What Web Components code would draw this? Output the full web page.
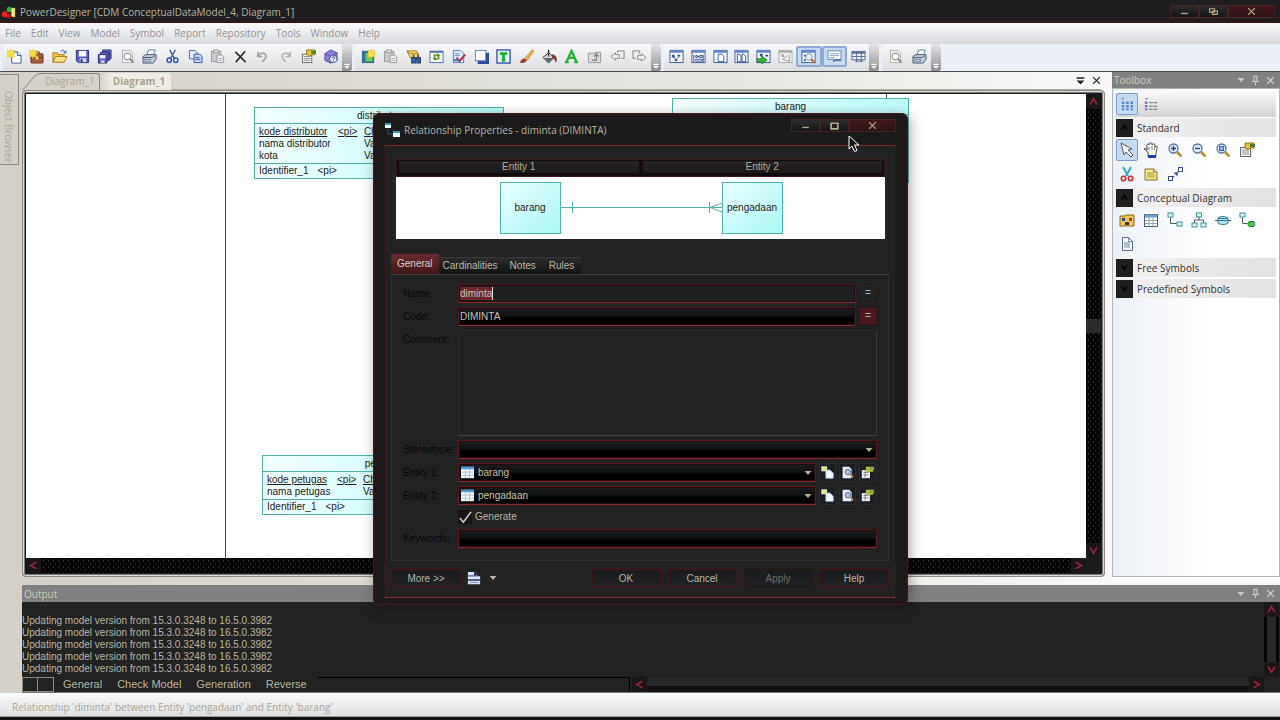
<!DOCTYPE html>
<html lang="en">
<head>
<meta charset="utf-8">
<title>PowerDesigner</title>
<style>
    html, body {
        height: 100%;
        margin: 0;
    }

    body {
        overflow: hidden;
        background: #111;
        font-family: "Open Sans", "Noto Sans", sans-serif;
        font-size: 10px;
        --arial: "Liberation Sans", Arial, sans-serif;
        --dark: #222;
    }
</style>
</head>
<body>
<pd-app></pd-app>

<script>
// Shared pieces for the small icons
const WIN = '<rect x="1" y="1.500" width="14" height="13" fill="#fff" stroke="#3a5a98"/><rect x="1" y="1" width="14" height="3" fill="#5f86c8"/>';
const LENS = '<circle cx="6.500" cy="6.500" r="4.500" fill="#dcecfb" stroke="#56759f" stroke-width="1.300"/><path d="M10 10l4.500 4.500" stroke="#b89128" stroke-width="2.600"/>';
const STAR = '<path d="M0 1l3 1 1-2 1 2 3-1-1 3 2 1-2 1 1 3-3-1-1 2-1-2-3 1 1-3-2-1 2-1z" fill="#f7df3c" stroke="#d8b62a" stroke-width=".4"/>';
const BOX = (x, y) => `<rect x="${x}" y="${y}" width="5" height="4" fill="#d8ffff" stroke="#3b8f95"/>`;

const ICONS = {
    logo: '<path d="M0 9c2-3 4 0 5-4l1 7c-1 3-5 2-6 0z" fill="#e22"/><circle cx="8.500" cy="5" r="3" fill="#2fae3c"/><path d="M4 14l3-5 4 4-3 2z" fill="#c11"/><path d="M11 4l4-1v11l-4-1z" fill="#f1d34a"/><path d="M11 4h2v9h-2z" fill="#fff3a8"/>',
    newdoc: '<path d="M5 3h6l4 4v8H5z" fill="#fdfeff" stroke="#38588f"/><path d="M11 3v4h4" fill="#cfe0f4" stroke="#38588f"/>' + STAR,
    project: '<rect x="2" y="5" width="13" height="10" rx="1" fill="#a5613a" stroke="#6d3c20"/><path d="M6 5V3h5v2M2 9h13" stroke="#6d3c20" fill="none"/><rect x="7" y="8" width="3" height="3" fill="#f4d79a"/>' + STAR,
    open: '<path d="M1 14V4h5l1 2h6v8z" fill="#f0c24a" stroke="#a97b1c"/><path d="M1 14l3-6h12l-3 6z" fill="#ffe08a" stroke="#a97b1c"/><path d="M9 3c2-3 4-2 5 1M12 3.500l2.500 1 .5-3" fill="none" stroke="#2f68b4"/>',
    save: '<path d="M1.500 1.500h13v13h-11l-2-2z" fill="#5a5ac4" stroke="#29297c"/><rect x="4" y="2" width="8" height="6" fill="#f4f6fb"/><rect x="5" y="10" width="7" height="4" fill="#d8dce8"/><rect x="6" y="11" width="2" height="3" fill="#29297c"/>',
    saveall: '<path d="M6 1h9v9l-2 2V3H6z" fill="#7777d4" stroke="#29297c"/><path d="M3.500 3.500h9v9h-9z" fill="#6a6acb" stroke="#29297c"/><path d="M1.500 6h9v9h-9z" fill="#5a5ac4" stroke="#29297c"/><rect x="3" y="6.500" width="6" height="3.500" fill="#eef"/><rect x="4" y="12" width="4" height="3" fill="#ccd"/>',
    preview: '<path d="M2.500 1.500h8l3 3v10h-11z" fill="#f6f6f6" stroke="#a9a9a9"/><circle cx="8" cy="8" r="3.500" fill="#fff" stroke="#9b9b9b" stroke-width="1.300"/><path d="M10.500 10.500l4 4" stroke="#8c8c8c" stroke-width="2"/>',
    print: '<path d="M5 7l2-6h7l-2 6z" fill="#fff" stroke="#5a79a8"/><path d="M1 8l3-2h11v5l-3 4H1z" fill="#c4cddb" stroke="#49566d"/><path d="M1 9h10l3-2" stroke="#49566d" fill="none"/><path d="M3 11h6v2H3z" fill="#eef4fb" stroke="#6b7890"/>',
    cut: '<path d="M5 1l5 9M11 1L6 10" stroke="#4a6294" stroke-width="1.600"/><circle cx="4.500" cy="12" r="2.300" fill="none" stroke="#2b57b5" stroke-width="1.600"/><circle cx="11.500" cy="12" r="2.300" fill="none" stroke="#2b57b5" stroke-width="1.600"/>',
    copy: '<path d="M1.500 1.500h6l2 2v7h-8z" fill="#dfeafb" stroke="#4669aa"/><path d="M6.500 5.500h6l2.500 2.500v6.500H6.500z" fill="#bcd3f5" stroke="#3558a0"/><path d="M8 9h4M8 11h5" stroke="#3558a0"/>',
    paste: '<rect x="1.500" y="2.500" width="10" height="11" fill="#c9c9c9" stroke="#989898"/><rect x="4" y="1" width="5" height="3" fill="#e6e6e6" stroke="#989898"/><path d="M7.500 6.500h5l2 2v6h-7z" fill="#f2f2f2" stroke="#989898"/><path d="M9 10h4M9 12h4" stroke="#aaa"/>',
    del: '<path d="M2.500 3l11 11M13 2.500L3 14" stroke="#2b2b2b" stroke-width="1.700"/>',
    undo: '<path d="M3 3v5h5M3.500 7.500c3-5 9-3 8 1-.4 2-2 4-4 5" fill="none" stroke="#a4a4a4" stroke-width="1.800"/>',
    redo: '<path d="M13 3v5H8M12.500 7.500c-3-5-9-3-8 1 .4 2 2 4 4 5" fill="none" stroke="#b4b4b4" stroke-width="1.800"/>',
    props: '<rect x="1.500" y="5.500" width="10" height="9" fill="#f4f4ee" stroke="#6b6b68"/><path d="M3 8h7M3 10h7M3 12h7" stroke="#8c9099"/><path d="M6 1h9v5h-4l-2 2-2-2H6z" fill="#e2c534" stroke="#8a7415"/><path d="M11 2h5v3h-5z" fill="#4f7a2c"/>',
    help: '<path d="M2 5l6-4 7 3v8l-7 3-6-3z" fill="#8d80d0" stroke="#5a4ea8"/><path d="M2 5l6 3 7-4M8 8v7" stroke="#5a4ea8" fill="none"/><circle cx="11" cy="10.500" r="4" fill="#e6ecfb" stroke="#45569c"/><path d="M9.700 9.500c.2-2 3-1.600 2.600 0-.2.800-1.200.8-1.200 2M11 12.500v1" stroke="#2c3f90" fill="none"/>',
    newdiag: '<rect x="1.500" y="2.500" width="12" height="12" fill="#3f9a4d" stroke="#2a5f94"/><rect x="1" y="2" width="3" height="13" fill="#356fb0"/><rect x="5" y="5" width="7" height="8" fill="#6fc56b"/><g transform="translate(7 0)">' + STAR + '</g>',
    find: '<path d="M1 2h10l2 3v5H5z" fill="#f7d76c" stroke="#9a7720"/><path d="M1 2l4 3h8" fill="none" stroke="#9a7720"/><rect x="6" y="9" width="4" height="6" fill="#3f63a0" stroke="#22406f"/><rect x="11.500" y="9" width="4" height="6" fill="#3f63a0" stroke="#22406f"/><path d="M8 6v3M13 6v3M10 11h2" stroke="#22406f" stroke-width="1.500"/>',
    refresh: '<rect x="1" y="2.500" width="14" height="12" fill="#fffff4" stroke="#4b6ea8"/><path d="M1 3h14" stroke="#4b6ea8" stroke-width="2"/><path d="M5 8c0-2 3-2 5-1M9 5l2 2-2 2M11 9c0 2-3 2-5 1M7 8l-2 2 2 2" fill="none" stroke="#4b9a20" stroke-width="1.400"/>',
    check: '<path d="M2.500 1.500h8l3 3v10h-11z" fill="#d9eafc" stroke="#4a7ec0"/><path d="M4 5h5M4 7h5" stroke="#5d8cc6"/><path d="M6 9l3 4 6-7" fill="none" stroke="#b8283c" stroke-width="2"/><path d="M3 12h5" stroke="#2b70c8" stroke-width="2"/>',
    shadow: '<rect x="4" y="4" width="12" height="12" fill="#2a4a9c"/><rect x="1.500" y="1.500" width="11" height="11" fill="#fbfdff" stroke="#5f82c8"/>',
    texticon: '<rect x="1" y="1" width="14" height="14" fill="#e6f0fc" stroke="#2f4fb0" stroke-width="1.400"/><path d="M4 5h8M8 5v7M6 12h4" stroke="#1fb22e" stroke-width="3"/>',
    brush: '<path d="M6 10L14 1l2 1-7 10z" fill="#f0b03e" stroke="#b97d1b" stroke-width=".6"/><path d="M1 15c1-4 3-5 5-5l2 2c0 2-3 3-7 3z" fill="#a03a2a"/>',
    bucket: '<path d="M1 9l6-5 6 5-6 6z" fill="#d9d9d9" stroke="#333"/><path d="M7 1v7" stroke="#222" stroke-width="1.500"/><path d="M11 6c4 0 5 4 4 8-1-3-2-4-4-5z" fill="#b02828" stroke="#333" stroke-width=".5"/><path d="M2 9.500h10l-5 5z" fill="#666"/>',
    font: '<path d="M3 13L8 2l5 11M5 9.500h6M1 14h4M11 14h4" stroke="#23b32f" stroke-width="2.400" fill="none"/>',
    export: '<path d="M1.500 4.500h6l1-1h6v11h-13z" fill="#dedede" stroke="#989898"/><path d="M5 12h5V6M7.500 8L10 5l2.500 3" fill="none" stroke="#8c8c8c" stroke-width="1.500"/>',
    back: '<path d="M1 8l5-4v2h4v4H6v2z" fill="#ececec" stroke="#8d8d8d"/><path d="M8 4V2h7v8h-3" fill="none" stroke="#9a9a9a" stroke-width="1.300"/>',
    forward: '<path d="M15 9l-5-4v2H6v4h4v2z" fill="#ececec" stroke="#8d8d8d"/><path d="M8 5V2H1v8h3" fill="none" stroke="#9a9a9a" stroke-width="1.300"/>',
    w1: WIN + '<path d="M3 6h3v3H3zM9 6h3v2H9zM6 11h3v2H6z" fill="#2f4fa0"/><path d="M5 8l2 3M11 8l-3 3" stroke="#2f4fa0"/>',
    w2: WIN + '<path d="M3 6v8M13 6v8M5 7h2v2H5zM9 7h3v2H9zM5 11h7v2H5zM7 8h2" fill="none" stroke="#2f4fa0"/>',
    w3: WIN + '<path d="M5.500 5.500h4l2 2v6h-6z" fill="#fff" stroke="#2f4fa0"/>',
    w4: WIN + '<path d="M3.500 5.500h2l2 2v6h-4zM8.500 5.500h2l2 2v6h-4z" fill="#fff" stroke="#2f4fa0"/>',
    w5: WIN + '<path d="M4 5h3v3H4zM10 6h3v2h-3zM8 10h3v2H8z" fill="#2f4fa0"/><path d="M1 10h5V7l6 5-6 4v-2H1z" fill="#35b135" stroke="#16701c" stroke-width=".6"/>',
    w6: '<rect x="1" y="1.500" width="14" height="13" fill="#f3f3f3" stroke="#aaa"/><path d="M1 3h14" stroke="#aaa" stroke-width="2"/><path d="M4 6h2v2H4zM10 7l-5 4 7 2M12 6v8" fill="none" stroke="#979797"/>',
    w7: WIN + '<path d="M3 6h2v2H3zM3 11h2v2H3z" fill="#2f4fa0"/><circle cx="8.500" cy="8.500" r="3.500" fill="#e8f2fd" stroke="#6a86ad"/><path d="M11 11l4 4" stroke="#b57d2c" stroke-width="2.500"/>',
    w8: '<path d="M1 2h14v9H9l-2 3v-3H1z" fill="#fdfdfd" stroke="#5c7db4"/><path d="M3 5h10M3 7h10M3 9h5" stroke="#8ca3c8"/><path d="M7 12h8" stroke="#5c7db4" stroke-width="2"/>',
    w9: '<rect x="1" y="2.500" width="14" height="9" fill="#e9eef8" stroke="#5a6c90"/><path d="M1 4h14" stroke="#5a6c90" stroke-width="2"/><path d="M6 3v11M11 3v11M4 13h9M1 8h14" stroke="#5a6c90"/>',
    gridview: '<path d="M1 1h4l-2 2z" fill="#888"/><g fill="#5f86c4"><path d="M2 5h3v3H2zM7 5h3v3H7zM12 5h3v3h-3zM2 9h3v3H2zM7 9h3v3H7zM12 9h3v3h-3zM2 13h3v2H2zM7 13h3v2H7zM12 13h3v2h-3z"/></g>',
    listview: '<path d="M1 1h4l-2 2z" fill="#888"/><path d="M1 5h3v3H1zM1 9h3v3H1zM1 13h3v2H1z" fill="#5f86c4"/><path d="M6 6.500h10M6 10.500h10M6 14h10" stroke="#555" stroke-dasharray="4 1"/>',
    pointer: '<path d="M2 1l11 6-4 1 5 5-2 2-5-5-2 3z" fill="#fbfbfb" stroke="#555"/>',
    hand: '<path d="M5 14V10L1 7c1-1 2-1 3 1V3c1-2 2-1 2 0V2c1-2 3-1 3 0v1c1-2 3-1 3 0v2c1-1 3-1 2 1l-1 5v3z" fill="#fff" stroke="#222" stroke-width=".8"/><path d="M6 5v3M9 4v4M11.500 5v3" stroke="#444" stroke-width=".7"/><path d="M5 13h8v3H5z" fill="#1e3ab4"/>',
    zoomin: LENS + '<path d="M4 6.500h5M6.500 4v5" stroke="#27436f" stroke-width="1.400"/>',
    zoomout: LENS + '<path d="M4 6.500h5" stroke="#27436f" stroke-width="1.400"/>',
    zoomfit: LENS + '<rect x="4.500" y="4.500" width="4" height="4" fill="#8fb0ec" stroke="#3a5fc4"/>',
    scissors: '<path d="M4 1l5 9M12 1L7 10" stroke="#3e9fd4" stroke-width="2"/><circle cx="4.500" cy="12.500" r="2.200" fill="none" stroke="#cc2f34" stroke-width="1.600"/><circle cx="11.500" cy="12.500" r="2.200" fill="none" stroke="#cc2f34" stroke-width="1.600"/>',
    note: '<path d="M2 3h9l3 3v8H2z" fill="#f8ec8c" stroke="#7d7434"/><path d="M4 7h7M4 9h8M4 11h8" stroke="#9c8f3f"/><path d="M11 3v3h3" fill="#fff" stroke="#7d7434"/>',
    linkicon: '<rect x="1.500" y="10.500" width="4" height="4" fill="#fff" stroke="#3c4a9a"/><rect x="11.500" y="1.500" width="4" height="4" fill="#fff" stroke="#3c4a9a"/><path d="M6 11l1-1M11 6L9 8" stroke="#3c4a9a" stroke-width="1.300"/><path d="M6.500 6.500h4v4z" fill="#3c4a9a"/>',
    package: '<path d="M1 4h5l1-1h8v11H1z" fill="#efc553" stroke="#8b6a1c"/><rect x="3" y="6" width="3" height="3" fill="#27508c"/><rect x="10" y="6" width="3" height="3" fill="#b53e28"/><rect x="6" y="10" width="4" height="3" fill="#333"/>',
    entity: '<rect x="1.500" y="2.500" width="13" height="12" fill="#fff" stroke="#4b6175"/><path d="M2 4h12" stroke="#6ea2cf" stroke-width="3"/><path d="M6 5v9M10 5v9M2 8.500h12M2 11.500h12" stroke="#93a7b8"/>',
    gridlight: '<rect x="0" y="1" width="16" height="14" fill="#f2f7fb"/><path d="M0 2.500h16" stroke="#4b9ad6" stroke-width="3"/><path d="M5.500 4v11M10.500 4v11M0 7.500h16M0 11.500h16" stroke="#a9bccb"/>',
    relation: BOX(1, 1) + BOX(10, 10) + '<path d="M3.500 5.500v6h6" fill="none" stroke="#4c5d6a"/>',
    dialog: '<path d="M1 1h6v5H1zM9 9h7v6H9z" fill="#e8ffff"/><path d="M1 1h6v2H1zM9 9h7v2H9z" fill="#3f9aa6"/><path d="M4 7v5h4" fill="none" stroke="#35589a"/>',
    inherit: BOX(5.5, 1) + BOX(1, 11) + BOX(10, 11) + '<path d="M8 5v3M3.500 11V8h9v3" fill="none" stroke="#4c5d6a"/>',
    assoc: '<rect x="2.500" y="4.500" width="11" height="8" rx="4" fill="#aee4ee" stroke="#3d7f9a"/><path d="M0 8.500h16M3 6.500h10" stroke="#3d6f9a"/>',
    assoclink: BOX(1, 1) + '<path d="M3.500 5.500v6h5" fill="none" stroke="#4c5d6a"/><rect x="9" y="9.500" width="7" height="5" rx="2" fill="#47c457" stroke="#1f7d35"/>',
    file: '<path d="M3.500 1.500h6l4 4v9h-10z" fill="#fafcff" stroke="#5b6c8e"/><path d="M9.500 1.500v4h4M5 7h6M5 9h6M5 11h6" fill="none" stroke="#6f81a3"/>',
    create: '<rect x="1" y="1" width="6" height="5" fill="#e6df80" stroke="#fdf9c0"/><path d="M6 5h5l4 4v6H6z" fill="#f4f8ff" stroke="#b9c9ea"/>',
    inspect: '<path d="M2 1h8l3 3v11H2z" fill="#e9f0fa"/><circle cx="8.500" cy="7.500" r="3.500" fill="#a9bcd8" stroke="#4e6484"/><path d="M11 10l4 4" stroke="#c08d60" stroke-width="2.200"/>',
    edit: '<rect x="1" y="5" width="10" height="10" fill="#eef0f2"/><path d="M3 8h6M3 11h6M5 6v8" stroke="#70777f"/><path d="M6 1h9v6h-4l-2 2-3-3z" fill="#b9b84e"/><path d="M11 1h5v4h-5z" fill="#8ba446"/>',
    report: '<path d="M1 1h7v4H1zM1 6h14v3H1zM1 11h14v4H1z" fill="#dce4fb"/><path d="M1 5.500h11M1 10h14M3 13h10M8 1l4 4" stroke="#7380c4"/>',
    pin: '<path d="M5 2h6M6 2v7M10 2v7M3 9.500h10M8 10v5" stroke="currentColor" stroke-width="1.600" fill="none"/>',
    close: '<path d="M2 2l12 12M14 2L2 14" stroke="currentColor" stroke-width="2.200" fill="none"/>',
    down: '<path d="M1 4h14l-7 8z" fill="currentColor"/>',
    list: '<path d="M1 2h14v3H1zM1 8h14l-7 7z" fill="currentColor"/>',
    min: '<path d="M2 11.500h12" stroke="currentColor" stroke-width="2.400"/>',
    max: '<path d="M2 4h12v10H2z" fill="none" stroke="currentColor" stroke-width="3"/>',
    restore: '<path d="M1 3h9v6H1zM6 7h9v6H6z" fill="#262018" stroke="currentColor" stroke-width="2"/>',
    chevron: '<path d="M2 13L8 3l6 10" fill="none" stroke="currentColor" stroke-width="2.800"/>',
    tick: '<path d="M2 9l4 5 9-12" fill="none" stroke="currentColor" stroke-width="1.800"/>',
    cursor: '<path d="M2 0v13l3-3 2.500 5.500 2.500-1L7.500 9H12z" fill="#111" stroke="#fff"/>'
};

class PdElement extends HTMLElement {
    constructor() {
        super();
        this.attachShadow({ mode: 'open' });
    }

    connectedCallback() {
        this.shadowRoot.innerHTML = `<style>
            *, *::before, *::after { box-sizing: border-box; }
            button, input, select, textarea { font: inherit; color: inherit; margin: 0; padding: 0; border: 0; background: none; outline: 0; }
            ${this.css()}
        </style>${this.html()}`;
    }

    css() { return ':host { display: block; }'; }
    html() { return '<slot></slot>'; }
}

class PdIcon extends PdElement {
    css() {
        const size = this.getAttribute('size') || 16;
        return `:host { display: block; flex: none; width: ${size}px; height: ${size}px; } svg { display: block; width: 100%; height: 100%; }`;
    }
    html() {
        return `<svg viewBox="0 0 16 16" fill="#fff" aria-hidden="true">${ICONS[this.getAttribute('name')]}</svg>`;
    }
}

// Minimise / maximise / close group, for the main window and for dialogs
class PdCaptionButtons extends PdElement {
    css() {
        return `
            :host { display: flex; height: 13px; color: #b0aa84; }
            button { display: flex; align-items: center; justify-content: center; width: 29px; background: linear-gradient(#2c2c2c, #161616); border: 1px solid #4a2226; }
            button:last-child { width: 47px; background: linear-gradient(#41191e, #2c1418); }
        `;
    }
    html() {
        return ['min', this.getAttribute('middle'), 'close'].map(name =>
            `<button aria-label="${name}"><pd-icon name="${name}" size="9"></pd-icon></button>`).join('');
    }
}

class PdTitleBar extends PdElement {
    css() {
        return `
            :host { display: flex; align-items: center; flex: none; height: 23px; padding: 2px 5px 0 2px; gap: 4px; background: #1f1f1f; border-bottom: 2px solid #351518; color: #b6b2a2; }
            .title { flex: 1; white-space: nowrap; }
        `;
    }
    html() {
        return `<pd-icon name="logo" size="14"></pd-icon><span class="title"><slot></slot></span><pd-caption-buttons middle="restore"></pd-caption-buttons>`;
    }
}

class PdMenuBar extends PdElement {
    css() {
        return `
            :host { display: flex; flex: none; gap: 10px; height: 21px; padding: 0 5px 2px; background: linear-gradient(#fbfbfd, #d8dade); color: #939393; }
        `;
    }
    html() {
        return ['File', 'Edit', 'View', 'Model', 'Symbol', 'Report', 'Repository', 'Tools', 'Window', 'Help']
            .map(item => `<button>${item}</button>`).join('');
    }
}

class PdToolbar extends PdElement {
    css() {
        return `
            :host { display: flex; flex: none; height: 28px; padding-left: 3px; background: #ebeff6; border-bottom: 1px solid #4c4c4c; gap: 3px; }
            .strip { display: flex; background: linear-gradient(#fafafc, #dcdde0); border-radius: 3px 0 0 3px; }
            .strip + .strip { padding-left: 1px; }
            .strip:nth-child(n + 3) { padding-left: 2px; }
            .tools { display: flex; padding-bottom: 2px; }
            .tools.s0 { width: 339px; }
            .tools.s1 { width: 294px; }
            .tools.s2 { width: 203px; }
            .tools.s3 { width: 47px; }
            .tools button { display: flex; flex: 1; align-items: center; justify-content: center; min-width: 0; }
            .tools button.on { background: #c6daf2; border: 2px solid #8eaad2; border-radius: 2px; margin: 2px 0; }
            .grip { display: flex; align-items: flex-end; justify-content: center; width: 10px; padding-bottom: 2px; background: linear-gradient(#e4e4e6, #8f9094); border-radius: 0 3px 3px 0; color: #fff; }
        `;
    }
    html() {
        const strips = [
            'newdoc project open save saveall preview print cut copy paste del undo redo props help',
            'newdiag paste find refresh check shadow texticon brush bucket font export back forward',
            'w1 w2 w3 w4 w5 w6 w7* w8* w9',
            'preview print'
        ];
        return strips.map((strip, i) => `
            <div class="strip">
                <div class="tools s${i}">
                    ${strip.split(' ').map(t => {
                        const name = t.replace('*', '');
                        return `<button class="${t === name ? '' : 'on'}" aria-label="${name}"><pd-icon name="${name}" size="15"></pd-icon></button>`;
                    }).join('')}
                </div>
                <div class="grip"><pd-icon name="list" size="6"></pd-icon></div>
            </div>
        `).join('');
    }
}

class PdScrollbar extends PdElement {
    css() {
        return `
            :host { display: flex; flex: none; height: 15px; background: #050505; color: #a3263c; }
            :host([vertical]) { flex-direction: column; width: 15px; height: auto; }
            button { display: flex; align-items: center; justify-content: center; flex: none; width: 15px; height: 15px; background: #1c1819; }
            .track { display: flex; flex: 1; justify-content: center; align-items: center; min-width: 0; min-height: 0; }
            :host(:not([solid])) .track {
                background: radial-gradient(circle, #303030 1px, transparent 1px) 0 0 / 5px 6px, radial-gradient(circle, #222 1px, transparent 1px) 2px 3px / 5px 6px;
            }
            .thumb { width: 100%; height: 9px; background: #282828; align-self: flex-start; }
            :host([vertical]) .thumb { width: 9px; height: 100%; }
            :host([knob][vertical]) .thumb { width: 15px; height: 14px; background: #2b2b2b; align-self: center; }
            .right { transform: rotate(90deg); }
            .bottom { transform: rotate(180deg); }
            .left { transform: rotate(270deg); }
        `;
    }
    html() {
        const vertical = this.hasAttribute('vertical');
        const thumb = this.hasAttribute('solid') || this.hasAttribute('knob') ? '<div class="thumb"></div>' : '';
        return `
            <button aria-label="back"><pd-icon class="${vertical ? 'top' : 'left'}" name="chevron" size="9"></pd-icon></button>
            <div class="track">${thumb}</div>
            <button aria-label="forward"><pd-icon class="${vertical ? 'bottom' : 'right'}" name="chevron" size="9"></pd-icon></button>
        `;
    }
}

// Entity symbol on the diagram canvas. attrs: "name|type" rows split by ";", the first is the key
class PdEntity extends PdElement {
    css() {
        return `
            :host { display: block; position: absolute; background: linear-gradient(100deg, #f4ffff, #b6fbf8); border: 1px solid #4fb3ab; color: #222; font-family: var(--arial); line-height: 12px; }
            h3 { margin: 0; font-size: 10px; font-weight: normal; text-align: center; line-height: 15px; border-bottom: 1px solid #4fb3ab; }
            .attrs { display: grid; grid-template-columns: var(--name-column, 79px) 26px 1fr; padding: 2px 4px 1px; border-bottom: 1px solid #4fb3ab; white-space: nowrap; overflow: hidden; }
            .key { text-decoration: underline; }
            .ids { display: flex; gap: 9px; padding: 1px 4px; }
        `;
    }
    html() {
        const rows = (this.getAttribute('attrs') || '').split(';').filter(Boolean);
        return `
            <h3>${this.getAttribute('name')}</h3>
            ${rows.length ? `<div class="attrs">${rows.map((row, i) => {
                const [name, type] = row.split('|');
                const cls = i ? '' : 'key';
                return `<span><span class="${cls}">${name}</span></span><span><span class="${cls}">${i ? '' : '&lt;pi&gt;'}</span></span><span class="${cls}">${type}</span>`;
            }).join('')}</div>
            <div class="ids"><span>Identifier_1</span><span>&lt;pi&gt;</span></div>` : ''}
        `;
    }
}

class PdDocument extends PdElement {
    css() {
        return `
            :host { display: flex; flex-direction: column; flex: 1; min-width: 0; }
            .tabs { display: flex; align-items: flex-end; flex: none; height: 18px; padding-right: 4px; }
            .tabs svg { display: block; flex: none; width: 18px; height: 17px; }
            .tabs > button { height: 17px; padding: 0 4px 2px 5px; color: #aaa695; white-space: nowrap; }
            .tabs > .first { border-top: 1px solid #8a877e; border-right: 1px solid #8a877e; border-radius: 0 3px 0 0; }
            .tabs > .active { padding: 0 6px 2px 13px; color: #a8a28c; font-weight: bold; background: linear-gradient(90deg, transparent, #eeece4 12px); border-radius: 6px 3px 0 0; }
            .tools { display: flex; flex: 1; justify-content: flex-end; align-self: stretch; align-items: center; gap: 7px; color: #222; border-bottom: 1px solid #aaa89f; }
            .frame { flex: 1; display: grid; grid-template: minmax(0, 1fr) 15px / minmax(0, 1fr) 15px; min-height: 0; padding: 3px; border: 1px solid #8c8c88; border-radius: 4px; background: #1c1c1c; box-shadow: inset 0 0 0 1px #dcdad4, inset 0 0 0 2px #777; }
            .canvas { position: relative; overflow: hidden; background: #fff; }
            .page-line { position: absolute; width: 1px; background: #444; top: 0; height: 100%; left: 199px; }
            .page-line.right { left: 860px; height: 5px; }
            .distributor { left: 228px; top: 13px; width: 250px; }
            .petugas { left: 236px; top: 361px; width: 241px; --name-column: 70px; }
            .barang { left: 646px; top: 4px; width: 237px; height: 85px; }
        `;
    }
    html() {
        return `
            <div class="tabs">
                <svg viewBox="0 0 18 17"><path d="M0 17C7 14 10 1 18 .5" fill="none" stroke="#8a877e"/></svg>
                <button class="first">Diagram_1</button>
                <button class="active">Diagram_1</button>
                <div class="tools">
                    <button aria-label="windows"><pd-icon name="list" size="9"></pd-icon></button>
                    <button aria-label="close"><pd-icon name="close" size="9"></pd-icon></button>
                </div>
            </div>
            <div class="frame">
                <div class="canvas">
                    <div class="page-line"></div>
                    <div class="page-line right"></div>
                    <pd-entity class="distributor" name="distributor" attrs="kode distributor|Char;nama distributor|Var;kota|Var"></pd-entity>
                    <pd-entity class="petugas" name="petugas" attrs="kode petugas|Char;nama petugas|Var"></pd-entity>
                    <pd-entity class="barang" name="barang"></pd-entity>
                </div>
                <pd-scrollbar vertical knob></pd-scrollbar>
                <pd-scrollbar></pd-scrollbar>
            </div>
        `;
    }
}

// Grey caption of a docked pane
class PdPaneHeader extends PdElement {
    css() {
        return `
            :host { display: flex; align-items: center; flex: none; gap: 5px; height: 16px; padding: 0 5px 0 2px; background: #808080; color: #cfccb8; }
            span { flex: 1; }
        `;
    }
    html() {
        return `<span><slot></slot></span>
            <button aria-label="menu"><pd-icon name="down" size="8"></pd-icon></button>
            <button aria-label="pin"><pd-icon name="pin" size="11"></pd-icon></button>
            <button aria-label="close"><pd-icon name="close" size="9"></pd-icon></button>`;
    }
}

class PdToolGroup extends PdElement {
    css() {
        return `
            :host { display: block; margin-bottom: 1px; }
            .head { display: flex; width: 100%; gap: 4px; align-items: center; height: 19px; margin-bottom: 2px; background: linear-gradient(90deg, #f2f2f2, #e2e2e2); color: #333; text-align: left; }
            .toggle { display: flex; align-items: center; justify-content: center; width: 17px; height: 18px; background: #1f1f1f; color: #000; }
            .flip { transform: rotate(180deg); }
            .tools { display: grid; grid-template-columns: repeat(6, 24px); grid-auto-rows: 24px; }
            .tools button { display: flex; align-items: center; justify-content: center; width: 22px; height: 22px; }
            .tools button.on { background: #c6daf2; border: 1px solid #7c9cc8; border-radius: 2px; }
        `;
    }
    html() {
        const tools = (this.getAttribute('tools') || '').split(' ').filter(Boolean);
        return `
            <button class="head"><span class="toggle"><pd-icon class="${tools.length ? '' : 'flip'}" name="chevron" size="7"></pd-icon></span>${this.getAttribute('label')}</button>
            ${tools.length ? `<div class="tools">${tools.map(t =>
                `<button class="${t === 'pointer' ? 'on' : ''}" aria-label="${t}"><pd-icon name="${t}"></pd-icon></button>`).join('')}</div>` : ''}
        `;
    }
}

class PdToolbox extends PdElement {
    css() {
        return `
            :host { display: flex; flex-direction: column; flex: none; width: 168px; }
            .body { flex: 1; padding: 2px 3px 0; border: 1px solid #b4b4b4; background: linear-gradient(90deg, #edf1f7, #fff 60%); }
            .views { display: flex; gap: 2px; height: 26px; margin-bottom: 1px; padding: 2px 0; background: linear-gradient(#fafafa, #d3d3d3); }
            .views button { display: flex; align-items: center; justify-content: center; width: 22px; height: 22px; }
            .views .on { background: #c6daf2; border: 1px solid #7c9cc8; border-radius: 2px; }
        `;
    }
    html() {
        return `
            <pd-pane-header>Toolbox</pd-pane-header>
            <div class="body">
                <div class="views">
                    <button class="on" aria-label="icons"><pd-icon name="gridview" size="14"></pd-icon></button>
                    <button aria-label="list"><pd-icon name="listview" size="14"></pd-icon></button>
                </div>
                <pd-tool-group label="Standard" tools="pointer hand zoomin zoomout zoomfit props scissors note linkicon"></pd-tool-group>
                <pd-tool-group label="Conceptual Diagram" tools="package entity relation inherit assoc assoclink file"></pd-tool-group>
                <pd-tool-group label="Free Symbols"></pd-tool-group>
                <pd-tool-group label="Predefined Symbols"></pd-tool-group>
            </div>
        `;
    }
}

class PdOutput extends PdElement {
    css() {
        return `
            :host { display: grid; grid-template: 17px 75px 15px / minmax(0, 1fr) 16px; flex: none; background: var(--dark); border-bottom: 1px solid #777; }
            pd-pane-header { grid-column: 1 / 3; height: 17px; }
            .log { padding-top: 13px; font-family: var(--arial); line-height: 12px; color: #b9b6a2; white-space: nowrap; overflow: hidden; }
            .log p { margin: 0; }
            .bottom { display: flex; }
            .nav { width: 16px; border: 1px solid #8d8b78; }
            .nav + .nav { border-left: 0; }
            .tabs { display: flex; flex: 1; max-width: 576px; gap: 15px; padding-left: 9px; border-right: 1px solid #000; font-family: var(--arial); font-size: 11px; line-height: 15px; color: #b9b6a2; }
            .tabs::after { content: ""; flex: 1; margin-left: -4px; border-top: 1px solid #000; }
            .bottom pd-scrollbar { flex: 1; margin-left: 2px; background: #121212; }
        `;
    }
    html() {
        const line = '<p>Updating model version from 15.3.0.3248 to 16.5.0.3982</p>';
        return `
            <pd-pane-header>Output</pd-pane-header>
            <div class="log">${line.repeat(5)}</div>
            <pd-scrollbar vertical solid></pd-scrollbar>
            <div class="bottom">
                <button class="nav" aria-label="previous"></button>
                <button class="nav" aria-label="next"></button>
                <div class="tabs">
                    ${['General', 'Check Model', 'Generation', 'Reverse'].map(t => `<button>${t}</button>`).join('')}
                </div>
                <pd-scrollbar solid></pd-scrollbar>
            </div>
        `;
    }
}

class PdRelationPreview extends PdElement {
    css() {
        return `
            :host { display: block; color: #aeaa96; font-family: var(--arial); }
            .head { display: grid; grid-template-columns: 1fr 1fr; height: 18px; background: #120a0c; border: 1px solid #3c1419; }
            .head span { line-height: 12px; text-align: center; background: linear-gradient(#262223, #1d1a1b); margin: 1px 2px 3px; }
            svg { display: block; width: 100%; height: 62px; background: #fff; font-family: "Liberation Sans", Arial, sans-serif; font-size: 10px; }
        `;
    }
    html() {
        return `
            <div class="head"><span>Entity 1</span><span>Entity 2</span></div>
            <svg viewBox="0 0 489 62">
                <defs><linearGradient id="g" x2="1" y2="1"><stop stop-color="#eaffff"/><stop offset="1" stop-color="#a8f8f4"/></linearGradient></defs>
                <g fill="none" stroke="#4fb3ab">
                    <path d="M164 30.500h162M176.500 25v11M313.500 25v11M326 26l-12 4.500 12 4.500"/>
                    <rect x="104.500" y="5.500" width="60" height="51" fill="url(#g)"/>
                    <rect x="326.500" y="5.500" width="60" height="51" fill="url(#g)"/>
                </g>
                <text x="134" y="34" text-anchor="middle" fill="#222">barang</text>
                <text x="356" y="34" text-anchor="middle" fill="#222">pengadaan</text>
            </svg>
        `;
    }
}

class PdRelationForm extends PdElement {
    css() {
        return `
            :host { display: block; font-family: var(--arial); color: #b9b6a6; }
            .tabs { display: flex; align-items: flex-end; height: 20px; }
            .tabs button { height: 17px; padding: 0 6px 1px; background: linear-gradient(#2a2b2b, #131313); border-top: 1px solid #383838; }
            .tabs button + button { padding: 0 6px 1px 4px; }
            .tabs button + button + button { padding: 0 7px 1px 6px; }
            .tabs .on { height: 20px; background: linear-gradient(#6a2a2e, #401619); border: 0; color: #d5cfc4; }
            .panel { display: grid; grid-template-columns: 55px minmax(0, 1fr); row-gap: 4px; padding: 9px 11px 12px 11px; border: 1px solid #2f3131; border-top-color: #3c3f3a; }
            label { line-height: 19px; color: #060606; white-space: nowrap; }
            .row { display: flex; gap: 3px; height: 19px; align-items: stretch; }
            .box { display: flex; align-items: center; gap: 4px; flex: 1; min-width: 0; height: 19px; padding: 0 3px 0 2px; background: linear-gradient(#1c1d1e, #101214 45%, #000 60%); border: 1px solid #5a181d; border-bottom-color: #8c282b; box-shadow: inset 0 0 0 1px #220b0e; color: #c5c1ac; }
            .box select { flex: 1; min-width: 0; appearance: none; }
            .box pd-icon:last-child { color: #b5b089; }
            input.box { display: block; padding: 0 1px; }
            #name { background: linear-gradient(90deg, #6b262c 32px, #d8d8d8 32px, #d8d8d8 33px, transparent 33px) 1px 2px / 33px 13px no-repeat, #202122; }
            .eq { width: 18px; height: 18px; border: 1px solid #321519; border-radius: 3px; background: #212426; color: #aaa; line-height: 10px; }
            .eq.on { background: #4c1a20; }
            textarea { display: block; width: 100%; height: 106px; resize: none; border: 1px solid #2b2d2d; border-right-color: #3a3c3c; border-bottom-color: #434646; }
            .act { display: flex; align-items: center; justify-content: center; width: 17px; background: #1c2024; border: 1px solid #2a2d30; }
            .act:last-child { margin-right: 1px; }
            .check { display: flex; gap: 3px; height: 16px; align-items: center; }
            .check label { line-height: 16px; color: #b9b6a2; }
            .check input { appearance: none; width: 14px; height: 14px; background: #1a1314; }
            .check .mark { display: grid; color: #ccc; }
            .check .mark > * { grid-area: 1 / 1; }
            .check .mark pd-icon { pointer-events: none; }
        `;
    }
    html() {
        const entityRow = (id, label, value) => `
            <label for="${id}">${label}</label>
            <div class="row">
                <div class="box"><pd-icon name="gridlight" size="13"></pd-icon><select id="${id}"><option>${value}</option></select><pd-icon name="down" size="8"></pd-icon></div>
                <button class="act" aria-label="create"><pd-icon name="create" size="13"></pd-icon></button>
                <button class="act" aria-label="select"><pd-icon name="inspect" size="13"></pd-icon></button>
                <button class="act" aria-label="properties"><pd-icon name="edit" size="13"></pd-icon></button>
            </div>`;
        return `
            <div class="tabs"><button class="on">General</button><button>Cardinalities</button><button>Notes</button><button>Rules</button></div>
            <div class="panel">
                <label for="name">Name:</label>
                <div class="row"><input class="box" id="name" value="diminta"><button class="eq">=</button></div>
                <label for="code">Code:</label>
                <div class="row"><input class="box" id="code" value="DIMINTA"><button class="eq on">=</button></div>
                <label for="comment">Comment:</label>
                <textarea id="comment"></textarea>
                <label for="stereotype">Stereotype:</label>
                <div class="box"><select id="stereotype"><option></option></select><pd-icon name="down" size="8"></pd-icon></div>
                ${entityRow('entity1', 'Entity 1:', 'barang')}
                ${entityRow('entity2', 'Entity 2:', 'pengadaan')}
                <span></span>
                <div class="check"><span class="mark"><input type="checkbox" id="generate" checked><pd-icon name="tick" size="14"></pd-icon></span><label for="generate">Generate</label></div>
                <label for="keywords">Keywords:</label>
                <input class="box" id="keywords">
            </div>
        `;
    }
}

class PdDialog extends PdElement {
    css() {
        return `
            :host { display: block; position: absolute; left: 373px; top: 113px; width: 535px; padding: 5px 11px 6px 10px; background: #1b1b1b; border: 1px solid #431a20; border-radius: 6px; box-shadow: inset 0 0 0 3px #241518, 2px 3px 14px rgba(0, 0, 0, .35); }
            .title { display: flex; gap: 4px; height: 26px; color: #b6b2a2; }
            .title pd-icon { margin-top: 3px; }
            .title span { flex: 1; line-height: 23px; }
            .body { background: var(--dark); border: 1px solid #33161a; border-top-color: #7b2426; border-bottom-color: #8c282b; padding: 13px 6px 9px; }
            .preview { margin: 0 4px 15px 5px; }
            .buttons { display: flex; align-items: center; gap: 6px; margin-top: 7px; font-family: var(--arial); color: #b9b6a6; }
            .buttons button { width: 70px; height: 20px; background: linear-gradient(#1a1c1e, #202225); border: 2px solid #3c171d; border-radius: 2px; }
            .buttons .menu { display: flex; flex: 1; align-items: center; width: auto; gap: 8px; padding-left: 0; background: none; border: 0; }
            .buttons button:disabled { color: #6b6b62; border-color: #261b1c; }
        `;
    }
    html() {
        return `
            <div class="title"><pd-icon name="dialog"></pd-icon><span><slot></slot></span><pd-caption-buttons middle="max"></pd-caption-buttons></div>
            <div class="body">
                <pd-relation-preview class="preview"></pd-relation-preview>
                <pd-relation-form></pd-relation-form>
                <div class="buttons">
                    <button>More &gt;&gt;</button>
                    <button class="menu" aria-label="report"><pd-icon name="report" size="14"></pd-icon><pd-icon name="down" size="8"></pd-icon></button>
                    <button>OK</button><button>Cancel</button><button disabled>Apply</button><button>Help</button>
                </div>
            </div>
        `;
    }
}

class PdApp extends PdElement {
    css() {
        return `
            :host { display: flex; flex-direction: column; height: 100vh; position: relative; }
            .work { display: flex; flex: 1; min-height: 0; background: linear-gradient(90deg, #d4d0c8, #e4e3dd 50%, #f8f8f7 85%); }
            .rail { flex: none; width: 22px; padding-top: 2px; }
            .rail button { width: 19px; height: 91px; writing-mode: vertical-rl; border: 1px solid #8d8a82; border-left: 0; color: #aaa695; padding-top: 14px; }
            .main { display: flex; flex-direction: column; flex: 1; min-width: 0; gap: 8px; }
            .docs { display: flex; flex: 1; min-height: 0; gap: 7px; }
            .status { flex: none; height: 24px; margin-bottom: 3px; padding: 0 12px; line-height: 28px; background: linear-gradient(#fafbfd, #dcdedf); color: #aaa695; border-bottom: 1px solid #999; }
            .cursor { position: absolute; left: 847px; top: 136px; }
        `;
    }
    html() {
        return `
            <pd-title-bar>PowerDesigner [CDM ConceptualDataModel_4, Diagram_1]</pd-title-bar>
            <pd-menu-bar></pd-menu-bar>
            <pd-toolbar></pd-toolbar>
            <div class="work">
                <div class="rail"><button>Object Browser</button></div>
                <div class="main">
                    <div class="docs"><pd-document></pd-document><pd-toolbox></pd-toolbox></div>
                    <pd-output></pd-output>
                </div>
            </div>
            <footer class="status">Relationship 'diminta' between Entity 'pengadaan' and Entity 'barang'</footer>
            <pd-dialog>Relationship Properties - diminta (DIMINTA)</pd-dialog>
            <pd-icon class="cursor" name="cursor"></pd-icon>
        `;
    }
}

customElements.define('pd-icon', PdIcon);
customElements.define('pd-caption-buttons', PdCaptionButtons);
customElements.define('pd-title-bar', PdTitleBar);
customElements.define('pd-menu-bar', PdMenuBar);
customElements.define('pd-toolbar', PdToolbar);
customElements.define('pd-scrollbar', PdScrollbar);
customElements.define('pd-entity', PdEntity);
customElements.define('pd-document', PdDocument);
customElements.define('pd-pane-header', PdPaneHeader);
customElements.define('pd-tool-group', PdToolGroup);
customElements.define('pd-toolbox', PdToolbox);
customElements.define('pd-output', PdOutput);
customElements.define('pd-relation-preview', PdRelationPreview);
customElements.define('pd-relation-form', PdRelationForm);
customElements.define('pd-dialog', PdDialog);
customElements.define('pd-app', PdApp);
</script>
</body>
</html>
